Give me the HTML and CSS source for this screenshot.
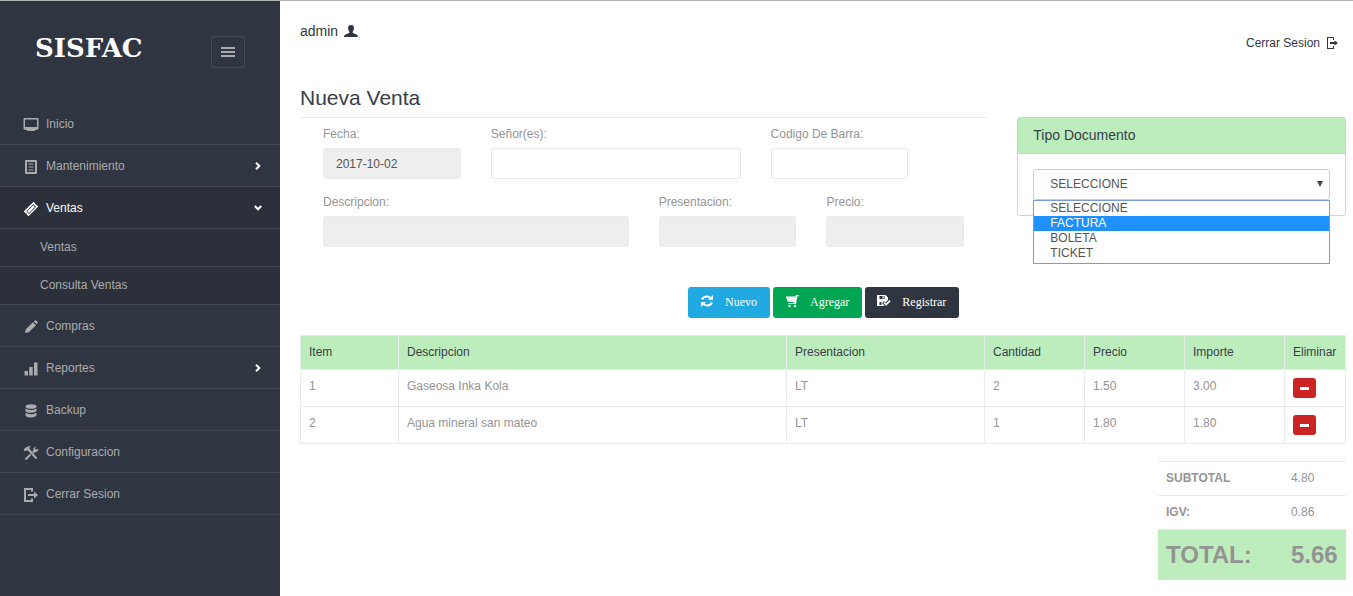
FILE: index.html
```
<!DOCTYPE html>
<html lang="es">

<head>
    <meta charset="utf-8">
    <meta name="viewport" content="width=device-width, initial-scale=1">
    <title>SISFAC - Nueva Venta</title>
    <link rel="stylesheet" href="styles.css">
</head>

<body>
    <div class="page">
        <aside class="sidebar">
            <header class="logo-env">
                <a href="#" class="logo">SISFAC</a>
                <button type="button" class="collapse" aria-label="Menu">
                    <svg width="14" height="12" viewBox="0 0 14 12" fill="currentColor"><path d="M0 1h14v2H0zM0 5h14v2H0zM0 9h14v2H0z"/></svg>
                </button>
            </header>
            <nav>
                <ul class="menu">
                    <li>
                        <a href="#">
                            <svg class="icon" viewBox="0 0 16 16" fill="currentColor"><path fill-rule="evenodd" d="M1.500 1h13q1 0 1 1v9.500q0 1-1 1.200L12 13v1H4v-1l-2.500-.3Q.5 12.500.5 11.500V2q0-1 1-1zM2 2.500V10h12V2.500z"/></svg>
                            <span>Inicio</span>
                        </a>
                    </li>
                    <li>
                        <a href="#">
                            <svg class="icon" viewBox="0 0 16 16" fill="currentColor"><path fill-rule="evenodd" d="M3 1h10q1 0 1 1v12q0 1-1 1H3q-1 0-1-1V2q0-1 1-1zM4 3v10h8V3z"/><path d="M5.500 4.500h5v1h-5zM5.500 7.500h5v1h-5zM5.500 10.500h5v1h-5z"/></svg>
                            <span>Mantenimiento</span>
                            <svg class="arrow" viewBox="0 0 8 8" fill="none" stroke="currentColor" stroke-width="2"><path d="M2 .8 5.300 4 2 7.200"/></svg>
                        </a>
                    </li>
                    <li class="opened">
                        <a href="#">
                            <svg class="icon" viewBox="0 0 16 16" fill="currentColor"><path fill-rule="evenodd" d="m10.500.8 1.800 1.800q-.2 1.200 1.100 1.100l1.900 1.900-9.800 9.600-1.800-1.800q.3-1.300-1.100-1.100L.7 10.400zm-.2 2.400-7 7 2.700 2.700 7-7z"/><path d="m10.300 4.300 1.700 1.700-6 6-1.700-1.700z"/></svg>
                            <span>Ventas</span>
                            <svg class="arrow" viewBox="0 0 8 8" fill="none" stroke="currentColor" stroke-width="2"><path d="M.8 2 4 5.300 7.200 2"/></svg>
                        </a>
                        <ul class="submenu">
                            <li><a href="#">Ventas</a></li>
                            <li><a href="#">Consulta Ventas</a></li>
                        </ul>
                    </li>
                    <li>
                        <a href="#">
                            <svg class="icon" viewBox="0 0 16 16" fill="currentColor"><path d="m2 14 .8-3.800 7.200-7 3 3-7.200 7zM10.800 2.500l1-.9q.8-.6 1.600.1l1 1q.7.8 0 1.600l-.7.900z"/></svg>
                            <span>Compras</span>
                        </a>
                    </li>
                    <li>
                        <a href="#">
                            <svg class="icon" viewBox="0 0 16 16" fill="currentColor"><path d="M1.500 10h3.500v4.500H1.500zM6.200 6h3.500v8.500H6.200zM11 1.500h3.500v13H11z"/></svg>
                            <span>Reportes</span>
                            <svg class="arrow" viewBox="0 0 8 8" fill="none" stroke="currentColor" stroke-width="2"><path d="M2 .8 5.300 4 2 7.200"/></svg>
                        </a>
                    </li>
                    <li>
                        <a href="#">
                            <svg class="icon" viewBox="0 0 16 16" fill="currentColor"><ellipse cx="8" cy="3.500" rx="5.500" ry="2.300"/><path d="M2.500 5.500q5.500 3 11 0v2.300q-.5 1.900-5.500 2t-5.500-2zM2.500 9.800q5.500 3 11 0V12q-.5 2.400-5.500 2.500T2.500 12z"/></svg>
                            <span>Backup</span>
                        </a>
                    </li>
                    <li>
                        <a href="#">
                            <svg class="icon" viewBox="0 0 16 16" fill="currentColor"><path d="M.5 5Q2 1.800 5.500 1.300L8 1.200 6.400 2.700l.3 1.200 7.600 9-1.400 1.300L5 5.700l-1.700-.4-1 1.200z"/><path d="m2.200 13.200 4.800-4.400 1.200 1.300-4.400 4.700q-1 .4-1.500-.2-.6-.7-.1-1.400zM9.300 6.700l.8-1q-.4-2.700 2.200-4.200l.5.300-.8 1.900 1.100 1 1.700-1 .6.300q-.4 3.100-3.500 3.200l-1.100 1z"/></svg>
                            <span>Configuracion</span>
                        </a>
                    </li>
                    <li>
                        <a href="#">
                            <svg class="icon" viewBox="0 0 16 16" fill="currentColor"><path d="M1 1h9v3.500H8V3H3v10h5v-1.500h2V15H1z"/><path d="M5 7h6V4.500L15 8l-4 3.500V9H5z"/></svg>
                            <span>Cerrar Sesion</span>
                        </a>
                    </li>
                </ul>
            </nav>
        </aside>

        <main class="main">
            <header class="topbar">
                <a href="#" class="user">
                    admin
                    <svg width="14" height="12" viewBox="0 0 14 12" fill="currentColor"><path d="M7 0q3 0 3 3 0 1.300-.8 2.700L8.500 7.500l1 .8 3 1.200Q14 10.200 14 12H0q0-1.800 1.500-2.500l3-1.200 1-.8-.7-1.800Q4 4.300 4 3q0-3 3-3z"/></svg>
                </a>
                <a href="#" class="logout">
                    Cerrar Sesion
                    <svg width="12" height="12" viewBox="0 0 12 12" fill="currentColor"><path d="M1 0h7v3H7V1H2v10h5V9h1v3H1z"/><path d="M4 5h4.500V3.500L12 6 8.500 8.500V7H4z"/></svg>
                </a>
            </header>

            <form id="venta">
                <div class="row">
                    <section class="datos">
                        <h1>Nueva Venta</h1>
                        <div class="fields">
                            <div class="field col-3">
                                <label for="fecha">Fecha:</label>
                                <input id="fecha" class="control" value="2017-10-02" disabled>
                            </div>
                            <div class="field col-5">
                                <label for="cliente">Señor(es):</label>
                                <input id="cliente" class="control">
                            </div>
                            <div class="field col-3">
                                <label for="codigo">Codigo De Barra:</label>
                                <input id="codigo" class="control">
                            </div>
                            <div class="field col-6">
                                <label for="descripcion">Descripcion:</label>
                                <input id="descripcion" class="control" disabled>
                            </div>
                            <div class="field col-3">
                                <label for="presentacion">Presentacion:</label>
                                <input id="presentacion" class="control" disabled>
                            </div>
                            <div class="field col-3">
                                <label for="precio">Precio:</label>
                                <input id="precio" class="control" disabled>
                            </div>
                        </div>
                        <div class="buttons">
                            <button type="button" class="btn btn-info">
                                <svg width="14" height="14" viewBox="0 0 14 14" fill="none" stroke="currentColor" stroke-width="2"><path d="M2 5.500Q3.300 2.500 7 2.500q2.500 0 4 2M12 8.500q-1.300 3-5 3-2.500 0-4-2"/><path d="M13 1v5H8zM1 13V8h5z" fill="currentColor" stroke="none"/></svg>
                                Nuevo
                            </button>
                            <button type="button" class="btn btn-success">
                                <svg width="14" height="14" viewBox="0 0 14 14" fill="currentColor"><path d="M14 1v1.300h-1.700L11 10H3.500V9h5.700v-.7L2.500 7.500.8 2.500h9.700L10.900 1z"/><circle cx="4.500" cy="12" r="1.200"/><circle cx="10" cy="12" r="1.200"/></svg>
                                Agregar
                            </button>
                            <button type="button" class="btn btn-primary">
                                <svg width="14" height="14" viewBox="0 0 14 14" fill="currentColor"><path fill-rule="evenodd" d="M0 1h8.500L11 3.500V6L8.500 8.500 7 7.200 5.200 9 7.500 12H0zM2.500 2v3h5V2zM2.500 8v3h2V8z"/><path d="M5.500 2.300h1.200v2.200H5.500zM6.500 9 7.500 8l1.500 1.500L12.500 6l1.200 1.200L9 12z"/></svg>
                                Registrar
                            </button>
                        </div>
                    </section>

                    <section class="panel">
                        <h2><label for="tipo">Tipo Documento</label></h2>
                        <div class="panel-body">
                            <div class="select-box">
                                <select id="tipo" class="control select">
                                    <option>SELECCIONE</option>
                                    <option>FACTURA</option>
                                    <option>BOLETA</option>
                                    <option>TICKET</option>
                                </select>
                                <svg class="caret" width="6" height="6" viewBox="0 0 6 6" fill="currentColor"><path d="M0 0h6L3 6z"/></svg>
                                <ul class="options">
                                    <li>SELECCIONE</li>
                                    <li class="selected">FACTURA</li>
                                    <li>BOLETA</li>
                                    <li>TICKET</li>
                                </ul>
                            </div>
                        </div>
                    </section>
                </div>

                <table class="items">
                    <colgroup>
                        <col class="c-item">
                        <col>
                        <col class="c-presentacion">
                        <col class="c-num">
                        <col class="c-num">
                        <col class="c-num">
                        <col class="c-eliminar">
                    </colgroup>
                    <thead>
                        <tr>
                            <th>Item</th>
                            <th>Descripcion</th>
                            <th>Presentacion</th>
                            <th>Cantidad</th>
                            <th>Precio</th>
                            <th>Importe</th>
                            <th>Eliminar</th>
                        </tr>
                    </thead>
                    <tbody>
                        <tr>
                            <td>1</td>
                            <td>Gaseosa Inka Kola</td>
                            <td>LT</td>
                            <td>2</td>
                            <td>1.50</td>
                            <td>3.00</td>
                            <td><button type="button" class="remove" aria-label="Eliminar"><svg width="9" height="3" viewBox="0 0 9 3"><rect width="9" height="3" fill="currentColor"/></svg></button></td>
                        </tr>
                        <tr>
                            <td>2</td>
                            <td>Agua mineral san mateo</td>
                            <td>LT</td>
                            <td>1</td>
                            <td>1.80</td>
                            <td>1.80</td>
                            <td><button type="button" class="remove" aria-label="Eliminar"><svg width="9" height="3" viewBox="0 0 9 3"><rect width="9" height="3" fill="currentColor"/></svg></button></td>
                        </tr>
                    </tbody>
                </table>

                <table class="totals">
                    <tr>
                        <th>SUBTOTAL</th>
                        <td>4.80</td>
                    </tr>
                    <tr>
                        <th>IGV:</th>
                        <td>0.86</td>
                    </tr>
                    <tr class="total">
                        <th>TOTAL:</th>
                        <td>5.66</td>
                    </tr>
                </table>
            </form>
        </main>
    </div>
</body>

</html>
```
FILE: styles.css
```
* {
    box-sizing: border-box;
}

body {
    margin: 0;
    border-top: 1px solid #b0b0b0;
    color: #949494;
    background-color: white;
    font-family: "Liberation Sans", Arial, sans-serif;
    font-size: 12px;
    line-height: 17px;
}

a {
    color: inherit;
    text-decoration: none;
}

ul {
    margin: 0;
    padding: 0;
    list-style: none;
}

button {
    cursor: pointer;
}

.page {
    display: flex;
    min-height: calc(100vh - 1px);
}

/* sidebar */
.sidebar {
    flex: 0 0 280px;
    color: #aaabae;
    background-color: #303641;
}

.logo-env {
    display: flex;
    justify-content: space-between;
    align-items: flex-start;
    padding: 35px 35px 0;
    height: 102px;
}

.logo {
    color: white;
    font-family: "DejaVu Serif", serif;
    font-size: 26px;
    font-weight: bold;
    line-height: 24px;
}

.collapse {
    display: flex;
    align-items: center;
    justify-content: center;
    width: 34px;
    height: 32px;
    padding: 0;
    border: 1px solid #454a54;
    border-radius: 3px;
    color: #aaabae;
    background-color: transparent;
}

.menu li {
    border-bottom: 1px solid #414650;
}

.menu a {
    display: flex;
    align-items: center;
    gap: 7px;
    padding: 13px 18px 11px 23px;
}

.icon {
    width: 16px;
    height: 16px;
}

.arrow {
    width: 8px;
    height: 8px;
    margin: 0 0 2px auto;
    color: white;
}

.menu .opened {
    border-bottom: none;
    background-color: #2b303a;
}

.opened > a {
    border-bottom: 1px solid #414650;
    color: white;
}

.submenu a {
    padding: 10px 20px 10px 40px;
}

/* content */
.main {
    flex: 1;
    min-width: 0;
    padding: 20px 7px 16px 20px;
}

.topbar {
    display: flex;
    justify-content: space-between;
    height: 63px;
    color: #303641;
}

.user,
.logout {
    display: flex;
    align-items: center;
    gap: 6px;
}

.user {
    height: 20px;
    font-size: 14px;
}

.logout {
    height: 20px;
    margin: 12px 8px 0 0;
}

.row {
    display: grid;
    grid-template-columns: repeat(12, minmax(0, 1fr));
    align-items: start;
    column-gap: 30px;
}

.datos {
    grid-column: span 8;
}

h1 {
    margin: 0;
    padding-bottom: 5px;
    border-bottom: 1px solid #ebebeb;
    color: #373e4a;
    font-size: 21px;
    font-weight: normal;
    line-height: 28px;
}

.fields {
    display: grid;
    grid-template-columns: repeat(12, minmax(0, 1fr));
    gap: 15px 30px;
    padding: 8px 23px 0;
}

.field label {
    display: block;
    margin-bottom: 5px;
}

.col-3 {
    grid-column: span 3;
}

.col-5 {
    grid-column: span 5;
}

.col-6 {
    grid-column: span 6;
}

.control {
    display: block;
    width: 100%;
    height: 31px;
    padding: 6px 12px;
    border: 1px solid #ebebeb;
    border-radius: 3px;
    color: #555;
    background-color: white;
    font: inherit;
}

.control:disabled {
    background-color: #eee;
}

.buttons {
    display: flex;
    justify-content: flex-end;
    gap: 3px;
    padding: 40px 28px 17px 0;
}

.btn {
    display: flex;
    align-items: center;
    gap: 11px;
    height: 31px;
    padding: 0 13px 0 12px;
    border: none;
    border-radius: 3px;
    color: white;
    font-family: "Liberation Serif", serif;
    font-size: 12px;
}

.btn svg {
    margin-bottom: 3px;
}

.btn-info {
    background-color: #21a9e1;
}

.btn-success {
    background-color: #00a651;
}

.btn-primary {
    background-color: #303641;
}

.panel {
    grid-column: span 4;
    margin-top: 33px;
    border: 1px solid #b4e8a8;
    border-radius: 3px;
}

.panel h2 {
    margin: 0;
    padding: 9px 15px;
    border-bottom: 1px solid #b4e8a8;
    color: #373e4a;
    background-color: #bdedbc;
    font-size: 14px;
    font-weight: normal;
}

.panel-body {
    padding: 15px;
}

.select-box {
    position: relative;
}

.select {
    padding: 0 16px;
    border-color: #c8cdd7;
    appearance: none;
}

.caret {
    position: absolute;
    top: 12px;
    right: 7px;
    color: #444;
}

/* open list of the document type */
.options {
    position: absolute;
    top: 100%;
    left: 0;
    right: 0;
    padding-bottom: 2px;
    border: 1px solid #7a9cd3;
    color: #555;
    background-color: white;
    line-height: 15px;
}

.options li {
    padding: 0 16px;
}

.options .selected {
    color: white;
    background-color: #1e90ff;
}

/* tables */
table {
    border-collapse: collapse;
}

th,
td {
    padding: 8px;
    text-align: left;
    vertical-align: top;
}

.items {
    width: 100%;
    table-layout: fixed;
}

.items th,
.items td {
    border: 1px solid #ebebeb;
}

.items th {
    color: #373e4a;
    background-color: #bdedbc;
    font-weight: normal;
}

.c-item {
    width: 98px;
}

.c-presentacion {
    width: 198px;
}

.c-num {
    width: 100px;
}

.c-eliminar {
    width: 61px;
}

.remove {
    display: flex;
    align-items: center;
    justify-content: center;
    width: 23px;
    height: 20px;
    padding: 0;
    border: none;
    border-radius: 3px;
    color: white;
    background-color: #cc2424;
}

.totals {
    width: 188px;
    margin: 17px 0 0 auto;
}

.totals th,
.totals td {
    border-top: 1px solid #ebebeb;
}

.totals th {
    width: 125px;
}

.totals .total {
    background-color: #bdedbc;
    font-size: 24px;
    line-height: 34px;
}

.total td {
    font-weight: bold;
}
```
